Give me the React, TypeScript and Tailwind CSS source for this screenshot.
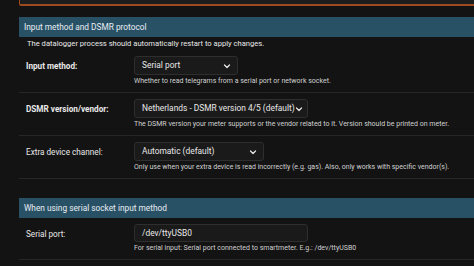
import React from "react";

const Chevron = () => (
  <svg viewBox="0 0 16 16" className="w-[8px] h-[8px] shrink-0" fill="none" stroke="#e5e5e5" strokeWidth={2.6} strokeLinecap="round" strokeLinejoin="round">
    <path d="M3 6l5 5 5-5" />
  </svg>
);

const Select = ({ value, width }: { value: string; width: string }) => (
  <div className={`flex items-center justify-between h-[19px] ${width} pl-[7px] pr-[6px] rounded-[3px] border border-[#2e2e2e] bg-[#1a1a1a] text-[8.4px] text-[#e8e8e8] whitespace-nowrap`}>
    <span>{value}</span>
    <Chevron />
  </div>
);

const Row = ({
  label,
  bold,
  control,
  help,
}: {
  label: string;
  bold?: boolean;
  control: React.ReactNode;
  help: string;
}) => (
  <div className="flex pl-[7px] pt-[6px] pb-[6px] border-b border-[#262626]">
    <div className={`w-[108px] pt-[4px] text-[8.2px] text-[#e8e8e8] whitespace-nowrap ${bold ? "font-bold" : ""}`}>{label}</div>
    <div className="flex flex-col">
      {control}
      <div className="mt-[1px] text-[7px] leading-[10px] text-[#d0d0d0] whitespace-nowrap">{help}</div>
    </div>
  </div>
);

const Header = ({ title }: { title: string }) => (
  <div className="h-[20px] flex items-center pl-[5px] bg-[#285166] text-[8.3px] text-[#e8eef2]">{title}</div>
);

export default function App() {
  return (
    <div className="w-[474px] h-[266px] overflow-hidden bg-[#131313] font-['Roboto',sans-serif]">
      <div className="ml-[19px] w-[520px]">
        <div className="h-[6px] bg-[#1d1d1d] border-x border-b-2 border-[#9c4a1e] rounded-b-[2px]" />
        <div className="mt-[11px]">
          <Header title="Input method and DSMR protocol" />
          <div className="pl-[8px] h-[13px] flex items-center text-[7.6px] text-[#e8e8e8]">
            The datalogger process should automatically restart to apply changes.
          </div>
          <Row
            label="Input method:"
            bold
            control={<Select value="Serial port" width="w-[104px]" />}
            help="Whether to read telegrams from a serial port or network socket."
          />
          <Row
            label="DSMR version/vendor:"
            bold
            control={<Select value="Netherlands - DSMR version 4/5 (default)" width="w-[174px]" />}
            help="The DSMR version your meter supports or the vendor related to it. Version should be printed on meter."
          />
          <Row
            label="Extra device channel:"
            control={<Select value="Automatic (default)" width="w-[130px]" />}
            help="Only use when your extra device is read incorrectly (e.g. gas). Also, only works with specific vendor(s)."
          />
        </div>
        <div className="mt-[19px]">
          <Header title="When using serial socket input method" />
          <Row
            label="Serial port:"
            control={
              <div className="flex items-center h-[18px] w-[174px] pl-[7px] rounded-[3px] border border-[#2e2e2e] bg-[#1a1a1a] text-[8.4px] text-[#e8e8e8]">
                /dev/ttyUSB0
              </div>
            }
            help="For serial input: Serial port connected to smartmeter. E.g.: /dev/ttyUSB0"
          />
        </div>
      </div>
    </div>
  );
}
